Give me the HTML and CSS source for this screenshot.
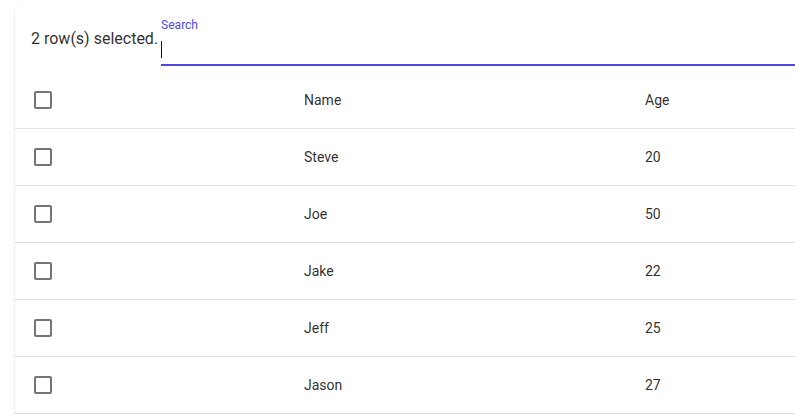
FILE: index.html
```html
<!DOCTYPE html>
<html lang="en">
<head>
<meta charset="utf-8">
<title>Selected rows</title>
<link rel="stylesheet" href="styles.css">
</head>
<body>
<div class="card">
  <div class="toolbar">
    <div class="title">2 row(s) selected.</div>
    <div class="search">
      <label class="search-label" for="q">Search</label>
      <div class="search-input">
        <span class="caret"></span>
        <input id="q" type="text">
      </div>
    </div>
  </div>
  <div class="table">
    <div class="row head">
      <div class="cell check"><svg viewBox="0 0 24 24" class="cb"><path d="M19 5v14H5V5h14m0-2H5c-1.1 0-2 .9-2 2v14c0 1.1.9 2 2 2h14c1.1 0 2-.9 2-2V5c0-1.1-.9-2-2-2z"/></svg></div>
      <div class="cell">Name</div>
      <div class="cell">Age</div>
    </div>
    <div class="row">
      <div class="cell check"><svg viewBox="0 0 24 24" class="cb"><path d="M19 5v14H5V5h14m0-2H5c-1.1 0-2 .9-2 2v14c0 1.1.9 2 2 2h14c1.1 0 2-.9 2-2V5c0-1.1-.9-2-2-2z"/></svg></div>
      <div class="cell">Steve</div>
      <div class="cell">20</div>
    </div>
    <div class="row">
      <div class="cell check"><svg viewBox="0 0 24 24" class="cb"><path d="M19 5v14H5V5h14m0-2H5c-1.1 0-2 .9-2 2v14c0 1.1.9 2 2 2h14c1.1 0 2-.9 2-2V5c0-1.1-.9-2-2-2z"/></svg></div>
      <div class="cell">Joe</div>
      <div class="cell">50</div>
    </div>
    <div class="row">
      <div class="cell check"><svg viewBox="0 0 24 24" class="cb"><path d="M19 5v14H5V5h14m0-2H5c-1.1 0-2 .9-2 2v14c0 1.1.9 2 2 2h14c1.1 0 2-.9 2-2V5c0-1.1-.9-2-2-2z"/></svg></div>
      <div class="cell">Jake</div>
      <div class="cell">22</div>
    </div>
    <div class="row">
      <div class="cell check"><svg viewBox="0 0 24 24" class="cb"><path d="M19 5v14H5V5h14m0-2H5c-1.1 0-2 .9-2 2v14c0 1.1.9 2 2 2h14c1.1 0 2-.9 2-2V5c0-1.1-.9-2-2-2z"/></svg></div>
      <div class="cell">Jeff</div>
      <div class="cell">25</div>
    </div>
    <div class="row">
      <div class="cell check"><svg viewBox="0 0 24 24" class="cb"><path d="M19 5v14H5V5h14m0-2H5c-1.1 0-2 .9-2 2v14c0 1.1.9 2 2 2h14c1.1 0 2-.9 2-2V5c0-1.1-.9-2-2-2z"/></svg></div>
      <div class="cell">Jason</div>
      <div class="cell">27</div>
    </div>
  </div>
</div>
</body>
</html>
```
FILE: styles.css
```css
html, body {
  margin: 0;
  padding: 0;
  background: #fff;
  overflow: hidden;
}
body {
  padding: 7px 0 0 15px;
  font-family: Roboto, "Liberation Sans", Arial, sans-serif;
  color: rgba(0, 0, 0, 0.84);
}
.card {
  width: 820px;
  background: #fff;
  border-radius: 4px;
  box-shadow: 0 2px 1px -1px rgba(0,0,0,0.2), 0 1px 1px 0 rgba(0,0,0,0.14), 0 1px 3px 0 rgba(0,0,0,0.12);
}
.toolbar {
  height: 64px;
  padding-left: 16px;
  display: flex;
  align-items: center;
}
.title {
  font-size: 16px;
  line-height: 24px;
  white-space: nowrap;
}
.search {
  flex: 1;
  align-self: flex-end;
  margin-bottom: 5px;
  margin-left: 3px;
  display: flex;
  flex-direction: column;
}
.search-label {
  font-size: 12px;
  line-height: 16px;
  color: #5048e5;
}
.search-input {
  height: 31px;
  border-bottom: 2px solid #5048e5;
  display: flex;
  align-items: flex-start;
}
.caret {
  width: 1px;
  height: 17px;
  margin-top: 8px;
  background: #111;
}
.search-input input {
  flex: 1;
  border: none;
  outline: none;
  background: transparent;
  font: inherit;
  font-size: 16px;
  padding: 0;
  height: 31px;
}
.row {
  display: grid;
  grid-template-columns: 289px 341px 1fr;
  align-items: center;
  height: 56px;
  border-bottom: 1px solid #e0e0e0;
  font-size: 14px;
}
.row.head {
  height: 57px;
}
.cell.check {
  display: flex;
  padding-left: 16px;
}
.cb {
  width: 24px;
  height: 24px;
  fill: #757575;
  display: block;
}
```
